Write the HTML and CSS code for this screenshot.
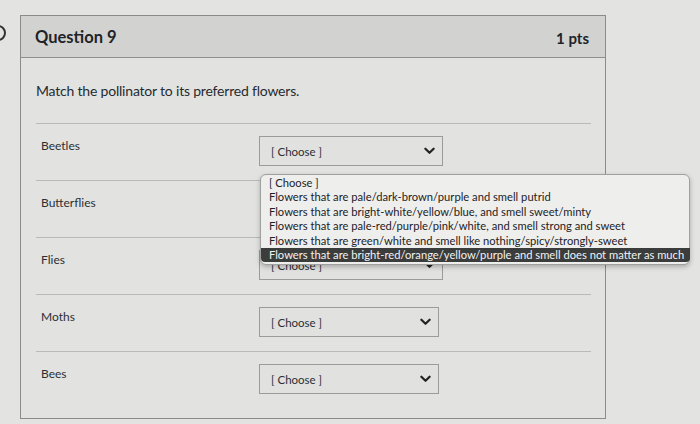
FILE: index.html
```html
<!DOCTYPE html>
<html>
<head>
<meta charset="utf-8">
<link rel="stylesheet" href="styles.css">
</head>
<body>
<div class="page">
  <span class="nav-circle"></span>
  <div class="card">
    <div class="card-header">
      <span class="q-title">Question 9</span>
      <span class="q-pts">1 pts</span>
    </div>
    <div class="card-body">
      <p class="q-text">Match the pollinator to its preferred flowers.</p>
      <div class="rows">
        <div class="row">
          <span class="label">Beetles</span>
          <div class="select"><span>[ Choose ]</span><svg class="chev" viewBox="0 0 12 8" width="11" height="8"><path d="M1.5 1.5 L6 6 L10.5 1.5" fill="none" stroke="#222" stroke-width="2.4" stroke-linecap="round" stroke-linejoin="round"/></svg></div>
        </div>
        <div class="row">
          <span class="label">Butterflies</span>
        </div>
        <div class="row">
          <span class="label">Flies</span>
          <div class="select"><span>[ Choose ]</span><svg class="chev" viewBox="0 0 12 8" width="11" height="8"><path d="M1.5 1.5 L6 6 L10.5 1.5" fill="none" stroke="#222" stroke-width="2.4" stroke-linecap="round" stroke-linejoin="round"/></svg></div>
        </div>
        <div class="row">
          <span class="label">Moths</span>
          <div class="select short"><span>[ Choose ]</span><svg class="chev" viewBox="0 0 12 8" width="11" height="8"><path d="M1.5 1.5 L6 6 L10.5 1.5" fill="none" stroke="#222" stroke-width="2.4" stroke-linecap="round" stroke-linejoin="round"/></svg></div>
        </div>
        <div class="row last">
          <span class="label">Bees</span>
          <div class="select short"><span>[ Choose ]</span><svg class="chev" viewBox="0 0 12 8" width="11" height="8"><path d="M1.5 1.5 L6 6 L10.5 1.5" fill="none" stroke="#222" stroke-width="2.4" stroke-linecap="round" stroke-linejoin="round"/></svg></div>
        </div>
      </div>
    </div>
  </div>
  <ul class="dropdown">
    <li>[ Choose ]</li>
    <li>Flowers that are pale/dark-brown/purple and smell putrid</li>
    <li>Flowers that are bright-white/yellow/blue, and smell sweet/minty</li>
    <li>Flowers that are pale-red/purple/pink/white, and smell strong and sweet</li>
    <li>Flowers that are green/white and smell like nothing/spicy/strongly-sweet</li>
    <li class="active">Flowers that are bright-red/orange/yellow/purple and smell does not matter as much</li>
  </ul>
</div>
</body>
</html>
```

FILE: styles.css
```css
html, body {
  margin: 0;
  padding: 0;
  background: #e3e4e2;
  font-family: Lato, "Liberation Sans", sans-serif;
  color: #2d3b45;
}

.page {
  position: relative;
  width: 700px;
  height: 424px;
  overflow: hidden;
  padding: 15px 0 0 20px;
  box-sizing: border-box;
}

.nav-circle {
  position: absolute;
  left: -10px;
  top: 25px;
  width: 12px;
  height: 12px;
  border: 2px solid #333;
  border-radius: 50%;
}

.card {
  width: 586px;
  height: 404px;
  border: 1px solid #8a8c8b;
  box-sizing: border-box;
  background: #e2e3e1;
}

.card-header {
  height: 42px;
  background: #d2d3d1;
  border-bottom: 1px solid #8e908f;
  display: flex;
  align-items: center;
  justify-content: space-between;
  padding: 0 16px 0 14px;
  box-sizing: border-box;
}

.q-title {
  font-weight: 700;
  font-size: 16.5px;
  color: #1f2328;
}

.q-pts {
  font-weight: 700;
  font-size: 15px;
  color: #1f2328;
  margin-top: 2px;
}

.card-body {
  padding: 0 14px 0 15px;
}

.q-text {
  margin: 0;
  padding: 24px 0 24px 0;
  font-size: 14px;
  color: #262b30;
  letter-spacing: -0.2px;
  line-height: 17px;
  border-bottom: 1px solid #b8bab9;
}

.rows {
  display: flex;
  flex-direction: column;
}

.row {
  height: 57px;
  border-bottom: 1px solid #b8bab9;
  display: flex;
  align-items: flex-start;
  box-sizing: border-box;
}

.row.last {
  border-bottom: none;
}

.label {
  width: 218px;
  padding: 14px 0 0 5px;
  font-size: 12px;
  color: #2a2f35;
}

.select {
  margin-top: 12px;
  width: 184px;
  height: 30px;
  box-sizing: border-box;
  border: 1px solid #9a9c9b;
  background: #e1e2e0;
  display: flex;
  align-items: center;
  justify-content: space-between;
  padding: 0 7px 0 11px;
  font-size: 11.5px;
  color: #2a2f35;
}

.select.short {
  width: 180px;
}

.chev {
  display: block;
}

.dropdown {
  position: absolute;
  left: 260px;
  top: 174px;
  width: 430px;
  margin: 0;
  padding: 1px 0 2px 0;
  list-style: none;
  background: #eeefed;
  border: 1px solid #9fa1a0;
  border-radius: 6px;
  box-shadow: 0 2px 5px rgba(0,0,0,0.25);
  font-size: 11.2px;
  line-height: 14.4px;
  color: #1e2226;
  box-sizing: border-box;
}

.dropdown li {
  padding: 0 0 0 8px;
  white-space: nowrap;
}

.dropdown li.active {
  background: #3b3c3c;
  color: #f2f2f2;
  margin: 0 -1px 0 0;
  border-radius: 0 0 4px 4px;
}
```
